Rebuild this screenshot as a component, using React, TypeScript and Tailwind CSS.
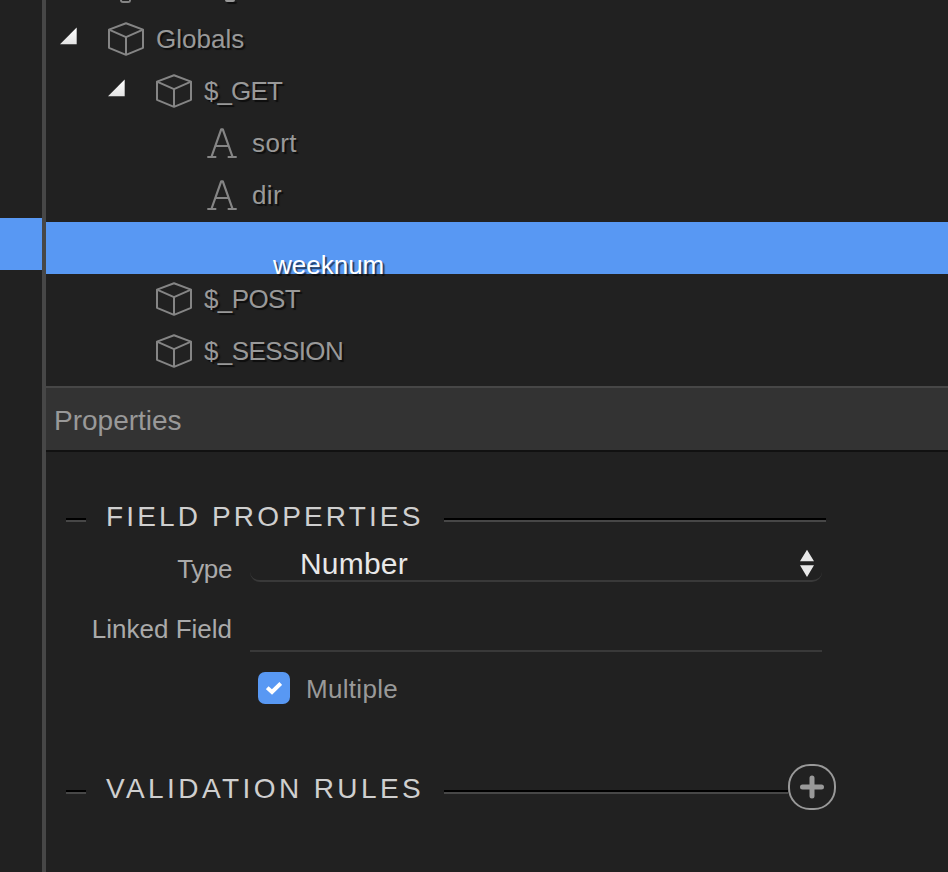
import type { ReactNode } from "react";

type TreeIcon = "object" | "text" | "none";

interface TreeRow {
  label: string;
  icon: TreeIcon;
  indent: string;
  tracking?: string;
  expanded?: boolean;
  selected?: boolean;
}

const rows: TreeRow[] = [
  { label: "Globals", icon: "object", indent: "pl-[14px]", expanded: true },
  { label: "$_GET", icon: "object", indent: "pl-[62px]", tracking: "tracking-[-0.9px]", expanded: true },
  { label: "sort", icon: "text", indent: "pl-[110px]", tracking: "tracking-[0.4px]" },
  { label: "dir", icon: "text", indent: "pl-[110px]", tracking: "tracking-[0.4px]" },
  { label: "weeknum", icon: "none", indent: "pl-[227px]", selected: true },
  { label: "$_POST", icon: "object", indent: "pl-[62px]", tracking: "tracking-[-0.6px]" },
  { label: "$_SESSION", icon: "object", indent: "pl-[62px]", tracking: "tracking-[-0.6px]" },
];

// ---------------------------------------------------------------------------
// Icons
// ---------------------------------------------------------------------------
function CubeIcon() {
  return (
    <svg className="h-[34px] w-[38px]" viewBox="0 0 38 34" fill="none" stroke="#858585" strokeWidth="2" strokeLinejoin="round">
      <path d="M19 1.2 36 7.6V25.8L19 32.8 2 25.8V7.6Z" />
      <path d="M2 7.6 19 15.2 36 7.6M19 15.2V32.8" />
    </svg>
  );
}

function LetterIcon() {
  return (
    <svg className="h-8 w-[30px]" viewBox="0 0 30 32" fill="none" stroke="#858585" strokeWidth="2.2" strokeLinejoin="round">
      <path d="M4.4 30 14.2 2.4H15.8L25.6 30M7.6 19H22.4M.3 30H9.3M20.7 30H29.7" />
    </svg>
  );
}

function Disclosure() {
  return (
    <svg className="h-[18px] w-[18px]" viewBox="0 0 18 18">
      <defs>
        <linearGradient id="disclosure" x1="0" y1="0" x2="0" y2="1">
          <stop offset="0" stopColor="#fff" />
          <stop offset="1" stopColor="#e4e4e4" />
        </linearGradient>
      </defs>
      <path d="M16.7 .5V17.2H0Z" fill="url(#disclosure)" />
    </svg>
  );
}

// ---------------------------------------------------------------------------
// Tree
// ---------------------------------------------------------------------------
function Row({ row }: { row: TreeRow }) {
  if (row.selected) {
    return (
      <div className={`h-[52px] bg-[#5898f3] ${row.indent} pt-[28px] text-white`}>
        <span className="block leading-[30px] [text-shadow:2px_2px_1px_rgba(0,0,0,0.6)]">{row.label}</span>
      </div>
    );
  }
  return (
    <div className={`flex h-[52px] items-center pb-[2px] ${row.indent}`}>
      <div className="mb-[6px] w-[46px] shrink-0">{row.expanded && <Disclosure />}</div>
      <div className="flex w-[50px] shrink-0 items-center">
        {row.icon === "object" && <div className="ml-px"><CubeIcon /></div>}
        {row.icon === "text" && <div className="ml-[5px]"><LetterIcon /></div>}
      </div>
      <span className={`leading-[30px] [text-shadow:2px_2px_1px_rgba(0,0,0,0.6)] ${row.tracking ?? ""}`}>
        {row.label}
      </span>
    </div>
  );
}

// ---------------------------------------------------------------------------
// Properties
// ---------------------------------------------------------------------------
function Rule({ className }: { className: string }) {
  return <div className={`mt-[5px] h-1 border-b-2 border-t-2 border-b-[#474747] border-t-black ${className}`} />;
}

function SectionTitle({ title, tracking, action }: { title: string; tracking: string; action?: ReactNode }) {
  return (
    <div className="flex h-12 items-center pl-5">
      <Rule className="w-5" />
      <h2 className={`w-[358px] pl-5 text-[28px] leading-8 whitespace-nowrap text-[#cfcfcf] ${tracking}`}>{title}</h2>
      <Rule className={action ? "w-[344px]" : "w-[382px]"} />
      {action}
    </div>
  );
}

function AddButton() {
  return (
    <button type="button" className="mb-1 flex h-[46px] w-12 items-center justify-center rounded-[22px] border-2 border-[#999]">
      <svg className="h-6 w-6" viewBox="0 0 24 24" stroke="#999" strokeWidth="5" strokeLinecap="round">
        <path d="M2.5 12H21.5M12 3V21" />
      </svg>
    </button>
  );
}

export default function App() {
  return (
    <div className="flex h-[872px] w-[948px] overflow-hidden bg-[#212121] font-['Liberation_Sans',Arial,sans-serif] text-[26px] text-[#999]">
      {/* neighbouring panel */}
      <div className="w-[42px] shrink-0 pt-[218px]">
        <div className="h-[52px] bg-[#5898f3]" />
      </div>
      <div className="w-1 shrink-0 bg-[#474747]" />

      <div className="min-w-0 flex-1">
        <div className="h-[386px]">
          {/* tail of the row scrolled off the top */}
          <div className="flex h-[14px] items-start">
            <div className="ml-[74px] h-[3px] w-[11px] rounded-b-[3px] border-2 border-t-0 border-[#858585]" />
            <div className="ml-[94px] h-[2px] w-[10px] rounded-b-full bg-[#999] shadow-[2px_2px_1px_rgba(0,0,0,0.6)]" />
          </div>
          {rows.map((row) => (
            <Row key={row.label} row={row} />
          ))}
        </div>

        <div className="h-[66px] border-b-2 border-t-2 border-b-[#111] border-t-[#474747] bg-[#333] pl-2 pt-[2px] text-[28px] leading-[62px]">
          Properties
        </div>

        <div className="pt-[41px]">
          <SectionTitle title="FIELD PROPERTIES" tracking="tracking-[3.15px]" />

          <div className="flex h-[42px]">
            <label className="w-[186px] pt-[13px] text-right leading-[30px] tracking-[-0.4px] text-[#aaa]">Type</label>
            <div className="ml-[18px] flex h-[41px] w-[572px] justify-between rounded-b-[10px] border-b-2 border-[#393939] pl-[50px] pr-2 text-[30px] leading-[46px] tracking-[0.2px] text-[#e8e8e8]">
              <span>Number</span>
              <svg className="mt-2 h-7 w-[14px]" viewBox="0 0 14 28" fill="#e8e8e8">
                <path d="M7 .8 14 12.3H0ZM0 16.3H14L7 28Z" />
              </svg>
            </div>
          </div>

          <div className="flex h-[69px]">
            <label className="w-[186px] pt-[31px] text-right leading-[30px] text-[#aaa]">Linked Field</label>
            <div className="ml-[18px] w-[572px] border-b-2 border-[#393939]" />
          </div>

          <div className="flex items-center pl-[212px] pt-5">
            <div className="flex h-8 w-8 items-center justify-center rounded-[7px] bg-[#5898f3]">
              <svg className="h-4 w-4" viewBox="0 0 16 16" fill="none" stroke="#fff" strokeWidth="4">
                <path d="M1.2 7.6 6 12 14.8 3.4" />
              </svg>
            </div>
            <label className="ml-4 mt-[2px] leading-[30px] tracking-[0.3px]">Multiple</label>
          </div>

          <div className="pt-[61px]">
            <SectionTitle title="VALIDATION RULES" tracking="tracking-[3.42px]" action={<AddButton />} />
          </div>
        </div>
      </div>
    </div>
  );
}
